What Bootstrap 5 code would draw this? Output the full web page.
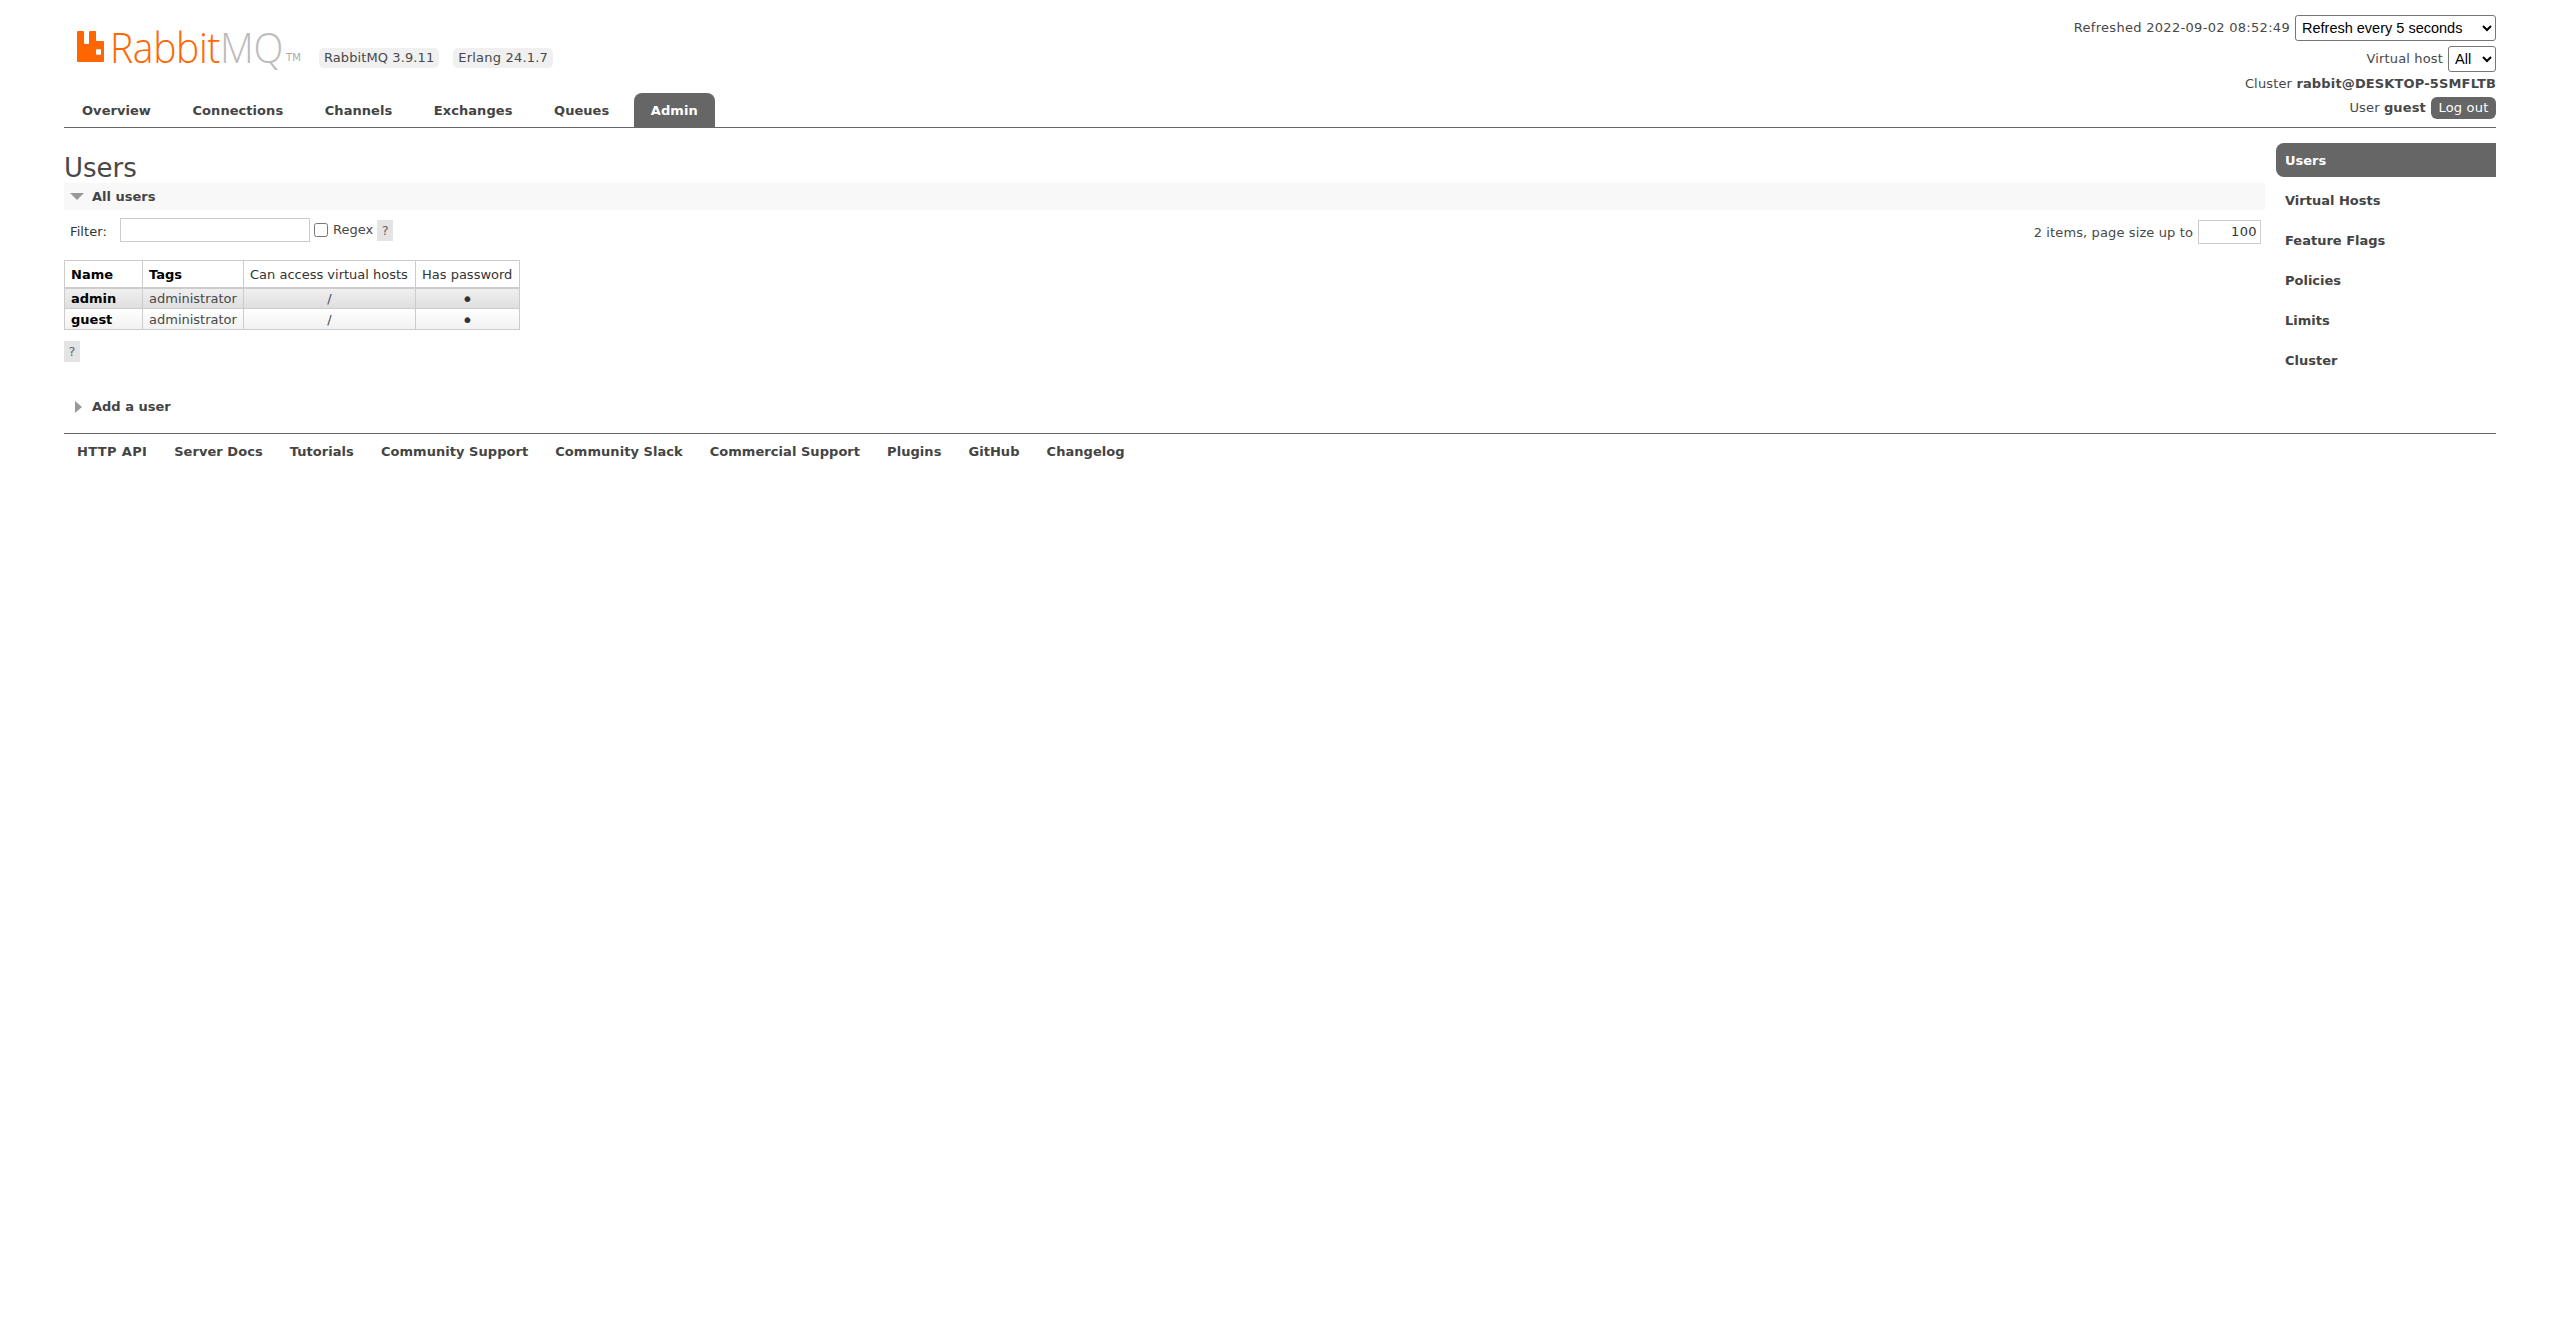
<!DOCTYPE html>
<html lang="en">
<head>
<meta charset="utf-8">
<title>RabbitMQ Management</title>
<link href="https://cdn.jsdelivr.net/npm/bootstrap@5.3.0/dist/css/bootstrap.min.css" rel="stylesheet">
<style>
body { font-family: "DejaVu Sans", Verdana, sans-serif; font-size: 13px; line-height: 16px; color: #484848; background: #fff; }
.page-wrap { margin: 0 64px; }
.top-head { height: 128px; border-bottom: 1px solid #666; }
.logo-row { padding: 31px 0 0 13px; height: 93px; }
.logo-icon { width: 29px; height: 31px; flex: none; }
.logo-word { font-family: "Open Sans", "Liberation Sans", sans-serif; font-weight: 300; font-size: 42px; line-height: 31px; margin-left: 4px; margin-right: -12px; letter-spacing: -.4px; color: #f60; white-space: nowrap; transform: scaleX(.93); transform-origin: left center; }
.logo-word span { color: #bbb; }
.logo-tm { font-size: 10px; line-height: 10px; width: 15px; color: #aaa; margin: 22px 0 0 2px; letter-spacing: .3px; }
.ver-tag { background: #f0f0f0; border-radius: 5px; height: 20px; line-height: 20px; padding: 0 5px; margin-top: 17px; color: #484848; white-space: nowrap; font-size: 13px; letter-spacing: .1px; }
.ver-first { margin-left: 18px; }
.ver-next { margin-left: 14px; padding: 0 5px; letter-spacing: .2px; }
.tab-list { list-style: none; margin: 0; padding: 0 0 0 1px; }
.tab-link { display: block; height: 34px; line-height: 36px; padding: 0 17px; margin-right: 7.6px; font-weight: 700; color: #444; text-decoration: none; border-radius: 8px 8px 0 0; letter-spacing: .05px; }
.tab-link.on { background: #666; color: #fff; }
.stat-col { padding-top: 15px; text-align: right; letter-spacing: .15px; }
.stat-row { display: flex; justify-content: flex-end; align-items: center; }
.stat-first { letter-spacing: .3px; }
.stat-gap { margin-top: 5px; }
.stat-cluster { margin-top: 4px; }
.stat-select { height: 26px; font: 14.5px "Liberation Sans", Arial, sans-serif; letter-spacing: 0; color: #000; background: #fff; border: 1px solid #767676; border-radius: 3px; margin-left: 5px; padding: 0 2px; }
.sel-refresh { width: 201px; }
.sel-vhost { width: 48px; }
.log-btn { background: #666; color: #fff; border: 0; border-radius: 6px; height: 22px; width: 65px; padding: 0; margin-left: 5px; font-size: 13px; line-height: 22px; letter-spacing: .2px; }
.main-col { width: 2201px; flex: none; }
.page-title { font-size: 26px; line-height: 30px; font-weight: 400; margin: 25px 0 0; color: #484848; }
.sec-bar { height: 27px; background: #f8f8f8; padding-left: 6px; font-weight: 700; color: #444; }
.tri-down { width: 0; height: 0; border-left: 7px solid transparent; border-right: 7px solid transparent; border-top: 7px solid #999; margin-right: 8px; }
.tri-right { width: 0; height: 0; border-top: 6px solid transparent; border-bottom: 6px solid transparent; border-left: 7px solid #999; margin: 0 10px 0 11px; }
.filter-row { margin-top: 8px; height: 24px; padding-left: 6px; padding-right: 4px; }
.filter-name { color: #333; width: 50px; letter-spacing: .1px; padding-top: 3px; }
.text-box { height: 24px; border: 1px solid #ccc; background: #fff; padding: 0 3px; font: 13px "DejaVu Sans", sans-serif; color: #333; }
.filter-box { width: 190px; }
.size-box { width: 63px; text-align: right; margin-left: 5px; letter-spacing: .4px; }
.page-note { padding-top: 3px; letter-spacing: .12px; }
.size-holder { margin-top: 3px; }
.rgx-check { width: 14px; height: 14px; margin: 0 5px 0 4px; }
.hint-box { display: inline-block; background: #e4e4e4; color: #666; width: 16px; height: 21px; line-height: 21px; text-align: center; }
.user-table { width: 455px; margin: 18px 0 0; border-collapse: collapse; table-layout: fixed; color: #484848; }
.user-table th, .user-table td { border: 1px solid #ccc; padding: 1px 3px 0 6px; white-space: nowrap; height: 21px; line-height: 18px; background: transparent; box-shadow: none; font-weight: 400; }
.user-table thead th { height: 27px; color: #333; padding-top: 2px; }
.user-table .col-strong { font-weight: 700; color: #000; }
.user-table tbody tr:first-child td { border-top-width: 2px; }
.user-table .cell-mid { text-align: center; padding-left: 3px; }
.user-table .cell-dot { text-align: center; padding-left: 3px; font-size: 20px; line-height: 16px; color: #333; }
.row-a { background: linear-gradient(#f0f0f0, #dedede); }
.row-b { background: linear-gradient(#fff, #f1f1f1); }
.hint-below { display: block; margin-top: 11px; }
.add-row { height: 12px; margin-top: 38px; font-weight: 700; color: #444; padding-top: 1px; }
.foot-nav { margin-top: 21px; border-top: 1px solid #666; padding: 10px 0 0 13px; }
.foot-link { font-weight: 700; color: #444; text-decoration: none; margin-right: 27px; white-space: nowrap; letter-spacing: .05px; }
.foot-link:first-child { letter-spacing: .35px; }
.side-col { width: 220px; margin: 15px 0 0 11px; }
.side-link { display: block; height: 34px; line-height: 35px; margin-bottom: 6px; padding-left: 9px; font-weight: 700; color: #444; text-decoration: none; border-radius: 8px 0 0 8px; }
.side-link.on { background: #666; color: #fff; }
</style>
</head>
<body>
<div class="page-wrap">
  <header class="top-head d-flex justify-content-between">
    <div class="d-flex flex-column">
      <div class="logo-row d-flex align-items-start">
        <svg class="logo-icon" viewBox="0 0 29 31" aria-hidden="true"><path fill="#f60" fill-rule="evenodd" d="M1 0h5a1 1 0 0 1 1 1v11a1 1 0 0 0 1 1h3a1 1 0 0 0 1-1V1a1 1 0 0 1 1-1h5a1 1 0 0 1 1 1v8a1 1 0 0 0 1 1h6a1 1 0 0 1 1 1v19a1 1 0 0 1-1 1H1a1 1 0 0 1-1-1V1a1 1 0 0 1 1-1zM19 19v4a.8.8 0 0 0 .8.8h3.4a.8.8 0 0 0 .8-.8v-4a.8.8 0 0 0-.8-.8h-3.4a.8.8 0 0 0-.8.8z"/></svg>
        <div class="logo-word">Rabbit<span>MQ</span></div>
        <div class="logo-tm">TM</div>
        <div class="ver-tag ver-first">RabbitMQ 3.9.11</div>
        <div class="ver-tag ver-next">Erlang 24.1.7</div>
      </div>
      <ul class="tab-list d-flex">
        <li><a class="tab-link" href="#">Overview</a></li>
        <li><a class="tab-link" href="#">Connections</a></li>
        <li><a class="tab-link" href="#">Channels</a></li>
        <li><a class="tab-link" href="#">Exchanges</a></li>
        <li><a class="tab-link" href="#">Queues</a></li>
        <li><a class="tab-link on" href="#">Admin</a></li>
      </ul>
    </div>
    <div class="stat-col">
      <div class="stat-row stat-first">Refreshed 2022-09-02 08:52:49<select class="stat-select sel-refresh"><option>Refresh every 5 seconds</option></select></div>
      <div class="stat-row stat-gap">Virtual host<select class="stat-select sel-vhost"><option>All</option></select></div>
      <div class="stat-row stat-cluster">Cluster&nbsp;<b>rabbit@DESKTOP-5SMFLTB</b></div>
      <div class="stat-row stat-gap">User&nbsp;<b>guest</b><button class="log-btn" type="button">Log out</button></div>
    </div>
  </header>
  <div class="d-flex">
    <main class="main-col">
      <h1 class="page-title">Users</h1>
      <div class="sec-bar d-flex align-items-center"><span class="tri-down"></span>All users</div>
      <div class="filter-row d-flex align-items-center justify-content-between">
        <div class="d-flex align-items-center">
          <span class="filter-name">Filter:</span>
          <input class="text-box filter-box" type="text">
          <input class="rgx-check" type="checkbox">
          <span>Regex</span>
          <span class="hint-box ms-1">?</span>
        </div>
        <div class="d-flex align-items-center size-holder"><span class="page-note">2 items, page size up to</span><input class="text-box size-box" type="text" value="100"></div>
      </div>
      <table class="user-table">
        <colgroup><col style="width:78px"><col style="width:101px"><col style="width:172px"><col style="width:104px"></colgroup>
        <thead><tr><th class="col-strong">Name</th><th class="col-strong">Tags</th><th>Can access virtual hosts</th><th>Has password</th></tr></thead>
        <tbody>
          <tr class="row-a"><td class="col-strong">admin</td><td>administrator</td><td class="cell-mid">/</td><td class="cell-dot">•</td></tr>
          <tr class="row-b"><td class="col-strong">guest</td><td>administrator</td><td class="cell-mid">/</td><td class="cell-dot">•</td></tr>
        </tbody>
      </table>
      <span class="hint-box hint-below">?</span>
      <div class="add-row d-flex align-items-center"><span class="tri-right"></span>Add a user</div>
    </main>
    <nav class="side-col">
      <a class="side-link on" href="#">Users</a>
      <a class="side-link" href="#">Virtual Hosts</a>
      <a class="side-link" href="#">Feature Flags</a>
      <a class="side-link" href="#">Policies</a>
      <a class="side-link" href="#">Limits</a>
      <a class="side-link" href="#">Cluster</a>
    </nav>
  </div>
  <footer class="foot-nav d-flex">
    <a class="foot-link" href="#">HTTP API</a>
    <a class="foot-link" href="#">Server Docs</a>
    <a class="foot-link" href="#">Tutorials</a>
    <a class="foot-link" href="#">Community Support</a>
    <a class="foot-link" href="#">Community Slack</a>
    <a class="foot-link" href="#">Commercial Support</a>
    <a class="foot-link" href="#">Plugins</a>
    <a class="foot-link" href="#">GitHub</a>
    <a class="foot-link" href="#">Changelog</a>
  </footer>
</div>
</body>
</html>
